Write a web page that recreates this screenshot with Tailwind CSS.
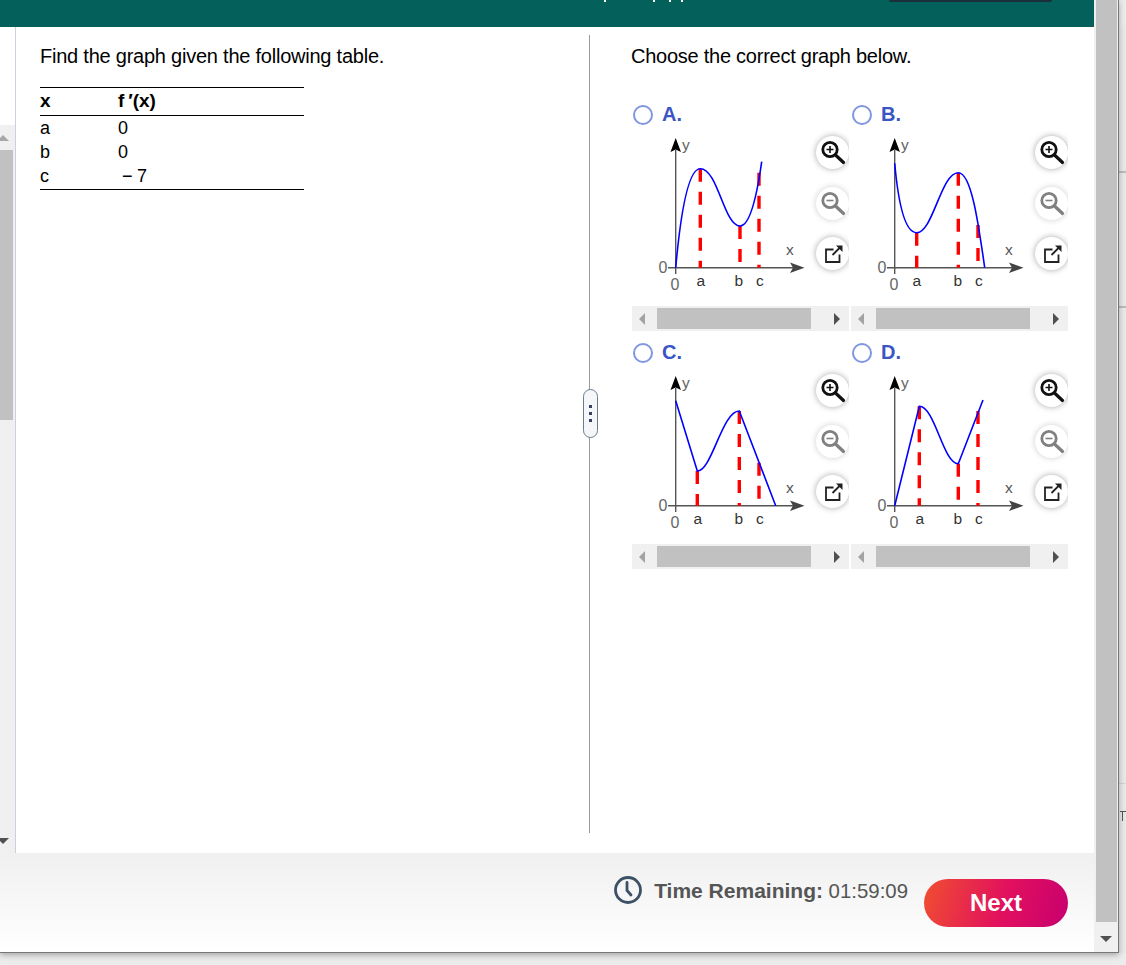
<!DOCTYPE html>
<html lang="en">
<head>
    <meta charset="UTF-8">
    <title>Find the graph</title>
    <script src="https://cdn.jsdelivr.net/npm/@tailwindcss/browser@4"></script>
</head>
<body class="bg-[#ececec] font-['Liberation_Sans',Arial,sans-serif] antialiased">
    <!-- shared icons -->
    <svg class="hidden" xmlns="http://www.w3.org/2000/svg">
        <symbol id="zoomIn" viewBox="0 0 33 33">
            <circle cx="14" cy="13.500" r="7.200" fill="none" stroke="#111" stroke-width="2.800"/>
            <path d="M19.500 19L27.500 26.500" stroke="#111" stroke-width="3.200" stroke-linecap="round"/>
            <path d="M10.500 13.500H17.500M14 10V17" stroke="#111" stroke-width="1.600"/>
        </symbol>
        <symbol id="zoomOut" viewBox="0 0 33 33">
            <circle cx="14" cy="13.500" r="7.200" fill="none" stroke="#808080" stroke-width="2.800"/>
            <path d="M19.500 19L27.500 26.500" stroke="#808080" stroke-width="3.200" stroke-linecap="round"/>
            <path d="M10.500 13.500H17.500" stroke="#808080" stroke-width="1.600"/>
        </symbol>
        <symbol id="popOut" viewBox="0 0 33 33">
            <path d="M17.500 12.500H10V25H23.500V17.500" fill="none" stroke="#222" stroke-width="1.800"/>
            <path d="M16.500 18L24 10.500" stroke="#222" stroke-width="1.800"/>
            <path d="M20 8.500H26.500V15Z" fill="#222"/>
        </symbol>
        <symbol id="axes" viewBox="0 0 184 176">
            <path d="M43.700 144V20" stroke="#555" stroke-width="1.400" fill="none"/>
            <path d="M43.700 8L49 22L43.700 19.500L38.500 22Z" fill="#000"/>
            <path d="M36 137.700H164" stroke="#555" stroke-width="1.400" fill="none"/>
            <path d="M172.500 137.700L158 132.500L161 137.700L158 143Z" fill="#444"/>
        </symbol>
    </svg>

    <div class="relative w-[1126px] h-[965px] overflow-hidden">
        <!-- window behind, on the right -->
        <div class="absolute top-[27px] right-0 w-[8px] h-[926px] bg-[#e9e9e9]"></div>
        <div class="absolute top-[171px] right-0 w-[7px] h-[2px] bg-[#bdbdbd]"></div>
        <div class="absolute top-[306px] right-0 w-[7px] h-[2px] bg-[#bdbdbd]"></div>
        <div class="absolute top-[783px] right-0 w-[7px] h-px bg-[#d5d5d5]"></div>
        <div class="absolute top-[811px] right-0 w-[6px] h-px bg-[#555]"></div>
        <div class="absolute top-[811px] right-[3px] w-px h-[10px] bg-[#555]"></div>

        <div class="relative flex w-[1119px] h-[953px] bg-white border-r border-b border-[#777] shadow-[0_2px_6px_rgba(0,0,0,0.3)]">
            <div class="flex flex-col w-[1094px]">
                <!-- header, only the bottom of it is on screen -->
                <header class="relative h-[27px] shrink-0 bg-[#03605a]">
                    <span class="absolute left-[604px] top-0 w-[2px] h-[2px] bg-white"></span>
                    <span class="absolute left-[653px] top-0 w-[2px] h-[2px] bg-white"></span>
                    <span class="absolute left-[669px] top-0 w-[2px] h-[2px] bg-white"></span>
                    <span class="absolute left-[681px] top-0 w-[2px] h-[2px] bg-white"></span>
                    <span class="absolute left-[889px] top-0 w-[163px] h-[2px] rounded-b-md bg-[#1b2f3b]"></span>
                </header>

                <div class="flex h-[826px] shrink-0">
                    <!-- left scrollbar -->
                    <div class="w-[16px] shrink-0 flex flex-col border-r border-[#ccd0dc]">
                        <div class="h-[98px] bg-white"></div>
                        <div class="relative flex-1 bg-[#f0f0f0]">
                            <div class="absolute left-[-3px] top-[10px] w-0 h-0 border-l-[6px] border-r-[6px] border-b-[6px] border-l-transparent border-r-transparent border-b-[#a8a8a8]"></div>
                            <div class="absolute left-0 top-[25px] w-[13px] h-[270px] bg-[#c1c1c1]"></div>
                            <div class="absolute left-[-3px] top-[713px] w-0 h-0 border-l-[6px] border-r-[6px] border-t-[6px] border-l-transparent border-r-transparent border-t-[#505050]"></div>
                        </div>
                    </div>

                    <!-- question -->
                    <section class="w-[573px] shrink-0 pl-[24px] pt-[17px] text-black">
                        <p class="text-[20px] leading-[24px] tracking-[-0.23px]">Find the graph given the following table.</p>
                        <table class="mt-[19px] w-[264px] border-collapse text-[18px] leading-[22px]">
                            <thead>
                                <tr class="h-[28px] border-t border-b border-black font-bold text-left text-[19px]">
                                    <th class="w-[78px] p-0 pb-px">x</th>
                                    <th class="p-0 pb-px">f&#8201;&#8242;(x)</th>
                                </tr>
                            </thead>
                            <tbody>
                                <tr class="h-[24px]"><td class="p-0">a</td><td class="p-0">0</td></tr>
                                <tr class="h-[24px]"><td class="p-0">b</td><td class="p-0">0</td></tr>
                                <tr class="h-[26px] border-b border-black"><td class="p-0">c</td><td class="p-0 pl-[4px] tracking-[0.5px]">&#8722;&#8201;7</td></tr>
                            </tbody>
                        </table>
                    </section>

                    <!-- answers -->
                    <section class="relative flex-1 mt-[8px] h-[798px] border-l border-[#9a9a9a] pl-[42px]">
                        <button class="absolute left-[-7px] top-[354px] flex flex-col items-center justify-center gap-[4px] w-[15px] h-[49px] rounded-[8px] border border-[#6b7b8c] bg-[#f5f6f9]">
                            <span class="w-[3px] h-[3px] bg-[#3a3f66]"></span>
                            <span class="w-[3px] h-[3px] bg-[#3a3f66]"></span>
                            <span class="w-[3px] h-[3px] bg-[#3a3f66]"></span>
                        </button>
                        <p class="-ml-px pt-[9px] text-[20px] leading-[24px] tracking-[-0.25px] text-black">Choose the correct graph below.</p>

                        <div class="grid grid-cols-[219px_219px] mt-[32px]">
                            <!-- A -->
                            <div class="flex flex-col h-[238px]">
                                <label class="flex items-center h-[30px] font-bold text-[20px] text-[#3b55c4]">
                                    <span class="ml-px w-[20px] h-[20px] rounded-full border-2 border-[#8096e0] bg-white"></span>
                                    <span class="ml-[9px] -mt-[2px]">A.</span>
                                </label>
                                <div class="flex w-[217px] h-[176px] overflow-hidden">
                                    <svg class="shrink-0" width="184" height="176" viewBox="0 0 184 176" font-size="15.500" fill="#444">
                                        <use href="#axes"/>
                                        <path d="M68.300 38.700V137.700M108 96V137.700M127 42.700V137.700" stroke="#f00" stroke-width="3.400" stroke-dasharray="13 10" fill="none"/>
                                        <path d="M43.700 137.700C48 90 55 38.700 68.300 38.700C86 38.700 92 96 108 96C118 96 125 65 129.700 31.700" stroke="#00f" stroke-width="1.600" fill="none"/>
                                        <text x="50" y="20" fill="#666">y</text><text x="154" y="125" fill="#555">x</text>
                                        <text x="26.500" y="143" fill="#666" font-size="16">0</text><text x="38.500" y="160" fill="#666" font-size="16">0</text>
                                        <text x="64.500" y="156" fill="#333">a</text><text x="102.500" y="156" fill="#333">b</text><text x="124" y="156" fill="#333">c</text>
                                    </svg>
                                    <div class="flex flex-col gap-[17.500px] pt-[6px]">
                                        <span class="w-[33px] h-[33px] rounded-full bg-white shadow-[0_0_6px_rgba(0,0,0,0.35)]"><svg width="33" height="33"><use href="#zoomIn"/></svg></span>
                                        <span class="w-[33px] h-[33px] rounded-full bg-white shadow-[0_0_6px_rgba(0,0,0,0.2)]"><svg width="33" height="33"><use href="#zoomOut"/></svg></span>
                                        <span class="w-[33px] h-[33px] rounded-full bg-white shadow-[0_0_6px_rgba(0,0,0,0.35)]"><svg width="33" height="33"><use href="#popOut"/></svg></span>
                                    </div>
                                </div>
                                <div class="flex items-center w-[217px] h-[25px] bg-[#f0f0f0]">
                                    <span class="ml-[7px] w-0 h-0 border-y-[6px] border-r-[6px] border-y-transparent border-r-[#a3a3a3]"></span>
                                    <span class="ml-[12px] w-[154px] h-[21px] bg-[#c1c1c1]"></span>
                                    <span class="ml-[23px] w-0 h-0 border-y-[6px] border-l-[6px] border-y-transparent border-l-[#505050]"></span>
                                </div>
                            </div>
                            <!-- B -->
                            <div class="flex flex-col h-[238px]">
                                <label class="flex items-center h-[30px] font-bold text-[20px] text-[#3b55c4]">
                                    <span class="ml-px w-[20px] h-[20px] rounded-full border-2 border-[#8096e0] bg-white"></span>
                                    <span class="ml-[9px] -mt-[2px]">B.</span>
                                </label>
                                <div class="flex w-[217px] h-[176px] overflow-hidden">
                                    <svg class="shrink-0" width="184" height="176" viewBox="0 0 184 176" font-size="15.500" fill="#444">
                                        <use href="#axes"/>
                                        <path d="M65.700 102.700V137.700M107.300 42.700V137.700M127 95V137.700" stroke="#f00" stroke-width="3.400" stroke-dasharray="13 10" fill="none"/>
                                        <path d="M43.700 33.300C47 70 53 102.700 65.700 102.700C82 102.700 90 42.700 107.300 42.700C120 42.700 127 90 133.700 137.700" stroke="#00f" stroke-width="1.600" fill="none"/>
                                        <text x="50" y="20" fill="#666">y</text><text x="154" y="125" fill="#555">x</text>
                                        <text x="26.500" y="143" fill="#666" font-size="16">0</text><text x="38.500" y="160" fill="#666" font-size="16">0</text>
                                        <text x="61.500" y="156" fill="#333">a</text><text x="102.500" y="156" fill="#333">b</text><text x="124" y="156" fill="#333">c</text>
                                    </svg>
                                    <div class="flex flex-col gap-[17.500px] pt-[6px]">
                                        <span class="w-[33px] h-[33px] rounded-full bg-white shadow-[0_0_6px_rgba(0,0,0,0.35)]"><svg width="33" height="33"><use href="#zoomIn"/></svg></span>
                                        <span class="w-[33px] h-[33px] rounded-full bg-white shadow-[0_0_6px_rgba(0,0,0,0.2)]"><svg width="33" height="33"><use href="#zoomOut"/></svg></span>
                                        <span class="w-[33px] h-[33px] rounded-full bg-white shadow-[0_0_6px_rgba(0,0,0,0.35)]"><svg width="33" height="33"><use href="#popOut"/></svg></span>
                                    </div>
                                </div>
                                <div class="flex items-center w-[217px] h-[25px] bg-[#f0f0f0]">
                                    <span class="ml-[7px] w-0 h-0 border-y-[6px] border-r-[6px] border-y-transparent border-r-[#a3a3a3]"></span>
                                    <span class="ml-[12px] w-[154px] h-[21px] bg-[#c1c1c1]"></span>
                                    <span class="ml-[23px] w-0 h-0 border-y-[6px] border-l-[6px] border-y-transparent border-l-[#505050]"></span>
                                </div>
                            </div>
                            <!-- C -->
                            <div class="flex flex-col h-[238px]">
                                <label class="flex items-center h-[30px] font-bold text-[20px] text-[#3b55c4]">
                                    <span class="ml-px w-[20px] h-[20px] rounded-full border-2 border-[#8096e0] bg-white"></span>
                                    <span class="ml-[9px] -mt-[2px]">C.</span>
                                </label>
                                <div class="flex w-[217px] h-[176px] overflow-hidden">
                                    <svg class="shrink-0" width="184" height="176" viewBox="0 0 184 176" font-size="15.500" fill="#444">
                                        <use href="#axes"/>
                                        <path d="M65.300 103V137.700M107.300 43V137.700M127 94.700V137.700" stroke="#f00" stroke-width="3.400" stroke-dasharray="13 10" fill="none"/>
                                        <path d="M43.700 32.700L65.300 103C80 103 90 43 107.300 43L143.700 137.700" stroke="#00f" stroke-width="1.600" fill="none"/>
                                        <text x="50" y="20" fill="#666">y</text><text x="154" y="125" fill="#555">x</text>
                                        <text x="26.500" y="143" fill="#666" font-size="16">0</text><text x="38.500" y="160" fill="#666" font-size="16">0</text>
                                        <text x="61.500" y="156" fill="#333">a</text><text x="102.500" y="156" fill="#333">b</text><text x="124" y="156" fill="#333">c</text>
                                    </svg>
                                    <div class="flex flex-col gap-[17.500px] pt-[6px]">
                                        <span class="w-[33px] h-[33px] rounded-full bg-white shadow-[0_0_6px_rgba(0,0,0,0.35)]"><svg width="33" height="33"><use href="#zoomIn"/></svg></span>
                                        <span class="w-[33px] h-[33px] rounded-full bg-white shadow-[0_0_6px_rgba(0,0,0,0.2)]"><svg width="33" height="33"><use href="#zoomOut"/></svg></span>
                                        <span class="w-[33px] h-[33px] rounded-full bg-white shadow-[0_0_6px_rgba(0,0,0,0.35)]"><svg width="33" height="33"><use href="#popOut"/></svg></span>
                                    </div>
                                </div>
                                <div class="flex items-center w-[217px] h-[25px] bg-[#f0f0f0]">
                                    <span class="ml-[7px] w-0 h-0 border-y-[6px] border-r-[6px] border-y-transparent border-r-[#a3a3a3]"></span>
                                    <span class="ml-[12px] w-[154px] h-[21px] bg-[#c1c1c1]"></span>
                                    <span class="ml-[23px] w-0 h-0 border-y-[6px] border-l-[6px] border-y-transparent border-l-[#505050]"></span>
                                </div>
                            </div>
                            <!-- D -->
                            <div class="flex flex-col h-[238px]">
                                <label class="flex items-center h-[30px] font-bold text-[20px] text-[#3b55c4]">
                                    <span class="ml-px w-[20px] h-[20px] rounded-full border-2 border-[#8096e0] bg-white"></span>
                                    <span class="ml-[9px] -mt-[2px]">D.</span>
                                </label>
                                <div class="flex w-[217px] h-[176px] overflow-hidden">
                                    <svg class="shrink-0" width="184" height="176" viewBox="0 0 184 176" font-size="15.500" fill="#444">
                                        <use href="#axes"/>
                                        <path d="M68.300 38.300V137.700M107.300 95.700V137.700M127 43V137.700" stroke="#f00" stroke-width="3.400" stroke-dasharray="13 10" fill="none"/>
                                        <path d="M43.700 137.700L68.300 38.300C84 38.300 92 95.700 107.300 95.700L132 32" stroke="#00f" stroke-width="1.600" fill="none"/>
                                        <text x="50" y="20" fill="#666">y</text><text x="154" y="125" fill="#555">x</text>
                                        <text x="26.500" y="143" fill="#666" font-size="16">0</text><text x="38.500" y="160" fill="#666" font-size="16">0</text>
                                        <text x="64.500" y="156" fill="#333">a</text><text x="102.500" y="156" fill="#333">b</text><text x="124" y="156" fill="#333">c</text>
                                    </svg>
                                    <div class="flex flex-col gap-[17.500px] pt-[6px]">
                                        <span class="w-[33px] h-[33px] rounded-full bg-white shadow-[0_0_6px_rgba(0,0,0,0.35)]"><svg width="33" height="33"><use href="#zoomIn"/></svg></span>
                                        <span class="w-[33px] h-[33px] rounded-full bg-white shadow-[0_0_6px_rgba(0,0,0,0.2)]"><svg width="33" height="33"><use href="#zoomOut"/></svg></span>
                                        <span class="w-[33px] h-[33px] rounded-full bg-white shadow-[0_0_6px_rgba(0,0,0,0.35)]"><svg width="33" height="33"><use href="#popOut"/></svg></span>
                                    </div>
                                </div>
                                <div class="flex items-center w-[217px] h-[25px] bg-[#f0f0f0]">
                                    <span class="ml-[7px] w-0 h-0 border-y-[6px] border-r-[6px] border-y-transparent border-r-[#a3a3a3]"></span>
                                    <span class="ml-[12px] w-[154px] h-[21px] bg-[#c1c1c1]"></span>
                                    <span class="ml-[23px] w-0 h-0 border-y-[6px] border-l-[6px] border-y-transparent border-l-[#505050]"></span>
                                </div>
                            </div>
                        </div>
                    </section>
                </div>

                <!-- footer -->
                <footer class="flex flex-1 items-start justify-end pr-[26px] pt-[26px] bg-gradient-to-b from-[#f0f0f0] to-white">
                    <svg class="mt-[-4px]" width="30" height="30" viewBox="0 0 30 30" fill="none" stroke="#3d5166" stroke-width="2.800">
                        <circle cx="15" cy="15" r="12.500"/>
                        <path d="M14 7.500V15.500L18 20" stroke-linecap="round"/>
                    </svg>
                    <p class="ml-[11px] text-[20.400px] leading-[24px] text-[#555]"><b class="text-[21px]">Time Remaining:</b> 01:59:09</p>
                    <button class="ml-[16px] w-[144px] h-[48px] rounded-full bg-[linear-gradient(105deg,#f04e30_0%,#e2105e_55%,#c8006f_100%)] text-[24px] font-bold text-white">Next</button>
                </footer>
            </div>

            <!-- right scrollbar -->
            <div class="relative w-[24px] bg-[#f0f0f0] border-l-2 border-[#f0f0f0]">
                <div class="w-[21px] h-[922px] bg-[#c1c1c1]"></div>
                <div class="absolute left-[4px] top-[936px] w-0 h-0 border-l-[6px] border-r-[6px] border-t-[6px] border-l-transparent border-r-transparent border-t-[#505050]"></div>
            </div>
        </div>
    </div>
</body>
</html>
